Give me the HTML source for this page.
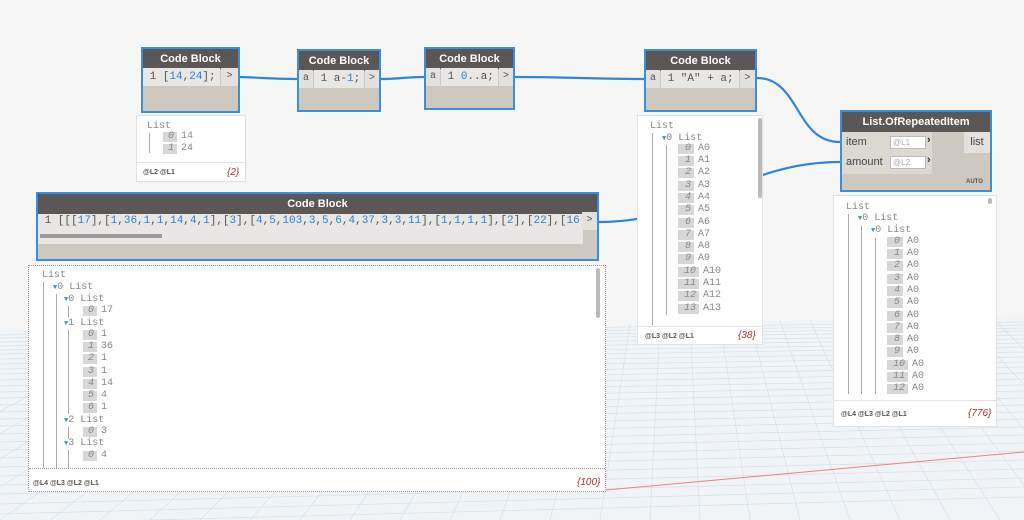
<!DOCTYPE html>
<html><head><meta charset="utf-8"><style>
*{margin:0;padding:0;box-sizing:border-box}
body{width:1024px;height:520px;overflow:hidden;background:#f6f6f6;position:relative;font-family:"Liberation Sans",sans-serif}
.a{position:absolute}
.node{position:absolute;border:2px solid #3b8ed8;background:#cdc8c0}
.hd{background:#5b5756;color:#fff;font:bold 11px "Liberation Sans",sans-serif;text-align:center;height:20px;line-height:20px}
.code{position:absolute;height:18px;background:#e9e7e3;font:11px "Liberation Mono",monospace;line-height:18px;color:#555;white-space:nowrap;overflow:hidden}
.bl{color:#2f7fd8}
.pv{position:absolute;background:#fff;border:1px solid #e2e2e2}
.t{position:absolute;font:10px "Liberation Mono",monospace;color:#888;white-space:nowrap;line-height:10px}
.i{position:absolute;background:#d7d7d7;color:#888;font:italic 10px "Liberation Mono",monospace;text-align:right;padding-right:3px;height:10px;line-height:10px}
.vl{position:absolute;width:1px;background:#aaa}
.ft{position:absolute;font:bold 7px "Liberation Sans",sans-serif;color:#555}
.cnt{position:absolute;font:italic 10px "Liberation Sans",sans-serif;color:#a33}
.tri{color:#3b8ed8;font-size:7px}
.btn{position:absolute;background:#e3e1dd;color:#555;font:10px "Liberation Mono",monospace;text-align:center;line-height:18px;height:18px}
</style></head><body>
<svg class="a" style="left:0;top:0" width="1024" height="520">
<defs><clipPath id="c"><polygon points="0,330 600,325 1024,315 1024,520 0,520"/></clipPath></defs>
<g clip-path="url(#c)" stroke="#d6e0e8" stroke-width="0.7">
<rect x="0" y="310" width="1024" height="210" fill="#f1f4f7" stroke="none"/>
<line x1="0" y1="335" x2="1024" y2="322"/><line x1="0" y1="338" x2="1024" y2="325"/><line x1="0" y1="342" x2="1024" y2="328"/><line x1="0" y1="346" x2="1024" y2="331"/><line x1="0" y1="350" x2="1024" y2="335"/><line x1="0" y1="354" x2="1024" y2="339"/><line x1="0" y1="359" x2="1024" y2="343"/><line x1="0" y1="364" x2="1024" y2="347"/><line x1="0" y1="369" x2="1024" y2="352"/><line x1="0" y1="374" x2="1024" y2="357"/><line x1="0" y1="380" x2="1024" y2="362"/><line x1="0" y1="386" x2="1024" y2="367"/><line x1="0" y1="392" x2="1024" y2="373"/><line x1="0" y1="398" x2="1024" y2="379"/><line x1="0" y1="405" x2="1024" y2="385"/><line x1="0" y1="412" x2="1024" y2="391"/><line x1="0" y1="419" x2="1024" y2="398"/><line x1="0" y1="426" x2="1024" y2="405"/><line x1="0" y1="434" x2="1024" y2="412"/><line x1="0" y1="442" x2="1024" y2="419"/><line x1="0" y1="450" x2="1024" y2="427"/><line x1="0" y1="458" x2="1024" y2="435"/><line x1="0" y1="467" x2="1024" y2="443"/><line x1="0" y1="476" x2="1024" y2="451"/><line x1="0" y1="485" x2="1024" y2="460"/><line x1="0" y1="494" x2="1024" y2="469"/><line x1="0" y1="504" x2="1024" y2="478"/><line x1="0" y1="514" x2="1024" y2="487"/><line x1="0" y1="524" x2="1024" y2="497"/>
<line x1="-200" y1="520" x2="150" y2="330"/><line x1="-150" y1="520" x2="180" y2="330"/><line x1="-100" y1="520" x2="210" y2="330"/><line x1="-50" y1="520" x2="240" y2="330"/><line x1="0" y1="520" x2="270" y2="330"/><line x1="50" y1="520" x2="300" y2="329"/><line x1="100" y1="520" x2="330" y2="328"/><line x1="150" y1="520" x2="360" y2="328"/><line x1="200" y1="520" x2="390" y2="328"/><line x1="250" y1="520" x2="420" y2="327"/><line x1="300" y1="520" x2="450" y2="327"/><line x1="350" y1="520" x2="480" y2="327"/><line x1="400" y1="520" x2="510" y2="326"/><line x1="450" y1="520" x2="540" y2="326"/><line x1="500" y1="520" x2="570" y2="325"/><line x1="550" y1="520" x2="600" y2="325"/><line x1="600" y1="520" x2="630" y2="324"/><line x1="650" y1="520" x2="660" y2="324"/><line x1="700" y1="520" x2="690" y2="323"/><line x1="750" y1="520" x2="720" y2="322"/><line x1="800" y1="520" x2="750" y2="321"/><line x1="850" y1="520" x2="780" y2="321"/><line x1="900" y1="520" x2="810" y2="320"/><line x1="950" y1="520" x2="840" y2="319"/><line x1="1000" y1="520" x2="870" y2="318"/><line x1="1050" y1="520" x2="900" y2="318"/><line x1="1100" y1="520" x2="930" y2="317"/><line x1="1150" y1="520" x2="960" y2="316"/><line x1="1200" y1="520" x2="990" y2="316"/><line x1="1300" y1="520" x2="1050" y2="315"/>
</g>
<line x1="606" y1="490" x2="1024" y2="452" stroke="#f08080" stroke-width="1"/>
<g fill="none" stroke="#2f86d6" stroke-width="2.2">
<path d="M240,77 C270,78 270,79 297,79"/>
<path d="M381,79 C400,79 405,77 424,77"/>
<path d="M515,77 C580,77 580,79 644,79"/>
<path d="M757,78 C800,78 795,142 840,142"/>
<path d="M599,222 C700,222 740,162 840,162"/>
</g>
</svg>

<!-- CB1 -->
<div class="node" style="left:141px;top:47px;width:99px;height:66px"><div class="hd">Code Block</div></div>
<div class="code" style="left:143px;top:68px;width:77px">&nbsp;1 [<span class="bl">14</span>,<span class="bl">24</span>];</div>
<div class="btn" style="left:221px;top:68px;width:17px">&gt;</div>
<div class="pv" style="left:136px;top:115px;width:110px;height:67px">
<div class="t" style="left:10px;top:6px">List</div>
<div class="vl" style="left:12px;top:17px;height:20px"></div>
<div class="i" style="left:26px;top:16px;width:14px">0</div><div class="t" style="left:44px;top:16px">14</div>
<div class="i" style="left:26px;top:28px;width:14px">1</div><div class="t" style="left:44px;top:28px">24</div>
<div class="a" style="left:0;top:46px;width:108px;height:1px;background:#e4e4e4"></div>
<div class="ft" style="left:6px;top:53px">@L2 @L1</div><div class="cnt" style="left:90px;top:51px">{2}</div>
</div>

<!-- CB2 -->
<div class="node" style="left:297px;top:49px;width:84px;height:63px"><div class="hd">Code Block</div></div>
<div class="btn" style="left:299px;top:70px;width:14px">a</div>
<div class="code" style="left:314px;top:70px;width:50px">&nbsp;1 a-<span class="bl">1</span>;</div>
<div class="btn" style="left:365px;top:70px;width:14px">&gt;</div>

<!-- CB3 -->
<div class="node" style="left:424px;top:47px;width:91px;height:63px"><div class="hd">Code Block</div></div>
<div class="btn" style="left:426px;top:68px;width:14px">a</div>
<div class="code" style="left:441px;top:68px;width:57px">&nbsp;1 <span class="bl">0</span>..a;</div>
<div class="btn" style="left:499px;top:68px;width:14px">&gt;</div>

<!-- CB4 -->
<div class="node" style="left:644px;top:49px;width:113px;height:63px"><div class="hd">Code Block</div></div>
<div class="btn" style="left:646px;top:70px;width:14px">a</div>
<div class="code" style="left:661px;top:70px;width:78px">&nbsp;1 "A" + a;</div>
<div class="btn" style="left:740px;top:70px;width:15px">&gt;</div>

<!-- List.OfRepeatedItem -->
<div class="node" style="left:840px;top:110px;width:152px;height:82px"><div class="hd">List.OfRepeatedItem</div>
<div class="a" style="left:0;top:20px;width:90px;height:42px;background:#dcd9d3"></div>
<div class="a" style="left:4px;top:24px;font:11px 'Liberation Sans';color:#444">item</div>
<div class="a" style="left:4px;top:44px;font:11px 'Liberation Sans';color:#444">amount</div>
<div class="a" style="left:48px;top:24px;width:36px;height:13px;background:#fff;border:1px solid #bbb;font:8px 'Liberation Sans';color:#aaa;line-height:11px;padding-left:2px">@L1</div>
<div class="a" style="left:48px;top:44px;width:36px;height:13px;background:#fff;border:1px solid #bbb;font:8px 'Liberation Sans';color:#aaa;line-height:11px;padding-left:2px">@L2</div>
<div class="a" style="left:85px;top:22px;font:bold 11px 'Liberation Sans';color:#333">›</div>
<div class="a" style="left:85px;top:42px;font:bold 11px 'Liberation Sans';color:#333">›</div>
<div class="a" style="left:122px;top:20px;width:26px;height:21px;background:#e3e1dd;font:11px 'Liberation Sans';color:#444;line-height:21px;text-align:center">list</div>
<div class="a" style="left:124px;top:67px;font:bold 6px 'Liberation Sans';color:#555">AUTO</div>
</div>

<!-- Preview4 -->
<div class="pv" style="left:637px;top:115px;width:126px;height:230px">
<div class="a" style="left:120px;top:2px;width:4px;height:80px;background:#bbb;border-radius:2px"></div>
<div class="t" style="left:12px;top:6px">List</div>
<div class="vl" style="left:14px;top:17px;height:192px"></div>
<div class="t" style="left:24px;top:18px"><span class="tri">▼</span>0 List</div>
<div class="vl" style="left:28px;top:29px;height:170px"></div>
<div class="i" style="left:40px;top:28px;width:16px">0</div><div class="t" style="left:60px;top:28px">A0</div>
<div class="i" style="left:40px;top:40px;width:16px">1</div><div class="t" style="left:60px;top:40px">A1</div>
<div class="i" style="left:40px;top:52px;width:16px">2</div><div class="t" style="left:60px;top:52px">A2</div>
<div class="i" style="left:40px;top:65px;width:16px">3</div><div class="t" style="left:60px;top:65px">A3</div>
<div class="i" style="left:40px;top:77px;width:16px">4</div><div class="t" style="left:60px;top:77px">A4</div>
<div class="i" style="left:40px;top:89px;width:16px">5</div><div class="t" style="left:60px;top:89px">A5</div>
<div class="i" style="left:40px;top:102px;width:16px">6</div><div class="t" style="left:60px;top:102px">A6</div>
<div class="i" style="left:40px;top:114px;width:16px">7</div><div class="t" style="left:60px;top:114px">A7</div>
<div class="i" style="left:40px;top:126px;width:16px">8</div><div class="t" style="left:60px;top:126px">A8</div>
<div class="i" style="left:40px;top:138px;width:16px">9</div><div class="t" style="left:60px;top:138px">A9</div>
<div class="i" style="left:40px;top:151px;width:21px">10</div><div class="t" style="left:65px;top:151px">A10</div>
<div class="i" style="left:40px;top:163px;width:21px">11</div><div class="t" style="left:65px;top:163px">A11</div>
<div class="i" style="left:40px;top:175px;width:21px">12</div><div class="t" style="left:65px;top:175px">A12</div>
<div class="i" style="left:40px;top:188px;width:21px">13</div><div class="t" style="left:65px;top:188px">A13</div>
<div class="a" style="left:0;top:210px;width:124px;height:1px;background:#e4e4e4"></div>
<div class="ft" style="left:7px;top:217px">@L3 @L2 @L1</div><div class="cnt" style="left:100px;top:214px">{38}</div>
</div>

<!-- Preview5 -->
<div class="pv" style="left:833px;top:195px;width:164px;height:232px">
<div class="a" style="left:154px;top:2px;width:4px;height:6px;background:#bbb;border-radius:2px"></div>
<div class="t" style="left:12px;top:7px">List</div>
<div class="vl" style="left:14px;top:18px;height:180px"></div>
<div class="t" style="left:24px;top:18px"><span class="tri">▼</span>0 List</div>
<div class="vl" style="left:27px;top:30px;height:168px"></div>
<div class="t" style="left:37px;top:30px"><span class="tri">▼</span>0 List</div>
<div class="vl" style="left:41px;top:42px;height:156px"></div>
<div class="i" style="left:53px;top:41px;width:16px">0</div><div class="t" style="left:73px;top:41px">A0</div>
<div class="i" style="left:53px;top:53px;width:16px">1</div><div class="t" style="left:73px;top:53px">A0</div>
<div class="i" style="left:53px;top:65px;width:16px">2</div><div class="t" style="left:73px;top:65px">A0</div>
<div class="i" style="left:53px;top:78px;width:16px">3</div><div class="t" style="left:73px;top:78px">A0</div>
<div class="i" style="left:53px;top:90px;width:16px">4</div><div class="t" style="left:73px;top:90px">A0</div>
<div class="i" style="left:53px;top:102px;width:16px">5</div><div class="t" style="left:73px;top:102px">A0</div>
<div class="i" style="left:53px;top:115px;width:16px">6</div><div class="t" style="left:73px;top:115px">A0</div>
<div class="i" style="left:53px;top:127px;width:16px">7</div><div class="t" style="left:73px;top:127px">A0</div>
<div class="i" style="left:53px;top:139px;width:16px">8</div><div class="t" style="left:73px;top:139px">A0</div>
<div class="i" style="left:53px;top:151px;width:16px">9</div><div class="t" style="left:73px;top:151px">A0</div>
<div class="i" style="left:53px;top:164px;width:21px">10</div><div class="t" style="left:78px;top:164px">A0</div>
<div class="i" style="left:53px;top:176px;width:21px">11</div><div class="t" style="left:78px;top:176px">A0</div>
<div class="i" style="left:53px;top:188px;width:21px">12</div><div class="t" style="left:78px;top:188px">A0</div>
<div class="a" style="left:0;top:204px;width:162px;height:1px;background:#e4e4e4"></div>
<div class="ft" style="left:7px;top:215px">@L4 @L3 @L2 @L1</div><div class="cnt" style="left:134px;top:212px">{776}</div>
</div>

<!-- Big CB -->
<div class="node" style="left:36px;top:192px;width:563px;height:69px"><div class="hd">Code Block</div>
<div class="a" style="left:0;top:20px;width:545px;height:30px;background:#e9e7e3"></div>
<div class="a" style="left:2px;top:40px;width:122px;height:4px;background:#999"></div>
</div>
<div class="code" style="left:38px;top:212px;width:543px;background:transparent">&nbsp;1 [[[<span class="bl">17</span>],[<span class="bl">1</span>,<span class="bl">36</span>,<span class="bl">1</span>,<span class="bl">1</span>,<span class="bl">14</span>,<span class="bl">4</span>,<span class="bl">1</span>],[<span class="bl">3</span>],[<span class="bl">4</span>,<span class="bl">5</span>,<span class="bl">103</span>,<span class="bl">3</span>,<span class="bl">5</span>,<span class="bl">6</span>,<span class="bl">4</span>,<span class="bl">37</span>,<span class="bl">3</span>,<span class="bl">3</span>,<span class="bl">11</span>],[<span class="bl">1</span>,<span class="bl">1</span>,<span class="bl">1</span>,<span class="bl">1</span>],[<span class="bl">2</span>],[<span class="bl">22</span>],[<span class="bl">16</span></div>
<div class="btn" style="left:582px;top:212px;width:15px">&gt;</div>

<!-- Big preview -->
<div class="pv" style="left:28px;top:265px;width:578px;height:227px;border:1px dotted #999">
<div class="a" style="left:567px;top:2px;width:4px;height:50px;background:#bbb;border-radius:2px"></div>
<div class="t" style="left:13px;top:5px">List</div>
<div class="vl" style="left:14px;top:16px;height:186px"></div>
<div class="t" style="left:24px;top:17px"><span class="tri">▼</span>0 List</div>
<div class="vl" style="left:27px;top:28px;height:174px"></div>
<div class="t" style="left:35px;top:29px"><span class="tri">▼</span>0 List</div>
<div class="vl" style="left:39px;top:40px;height:12px"></div>
<div class="i" style="left:54px;top:40px;width:14px">0</div><div class="t" style="left:72px;top:40px">17</div>
<div class="t" style="left:35px;top:53px"><span class="tri">▼</span>1 List</div>
<div class="vl" style="left:39px;top:64px;height:84px"></div>
<div class="i" style="left:54px;top:64px;width:14px">0</div><div class="t" style="left:72px;top:64px">1</div>
<div class="i" style="left:54px;top:76px;width:14px">1</div><div class="t" style="left:72px;top:76px">36</div>
<div class="i" style="left:54px;top:88px;width:14px">2</div><div class="t" style="left:72px;top:88px">1</div>
<div class="i" style="left:54px;top:101px;width:14px">3</div><div class="t" style="left:72px;top:101px">1</div>
<div class="i" style="left:54px;top:113px;width:14px">4</div><div class="t" style="left:72px;top:113px">14</div>
<div class="i" style="left:54px;top:125px;width:14px">5</div><div class="t" style="left:72px;top:125px">4</div>
<div class="i" style="left:54px;top:137px;width:14px">6</div><div class="t" style="left:72px;top:137px">1</div>
<div class="t" style="left:35px;top:150px"><span class="tri">▼</span>2 List</div>
<div class="vl" style="left:39px;top:161px;height:12px"></div>
<div class="i" style="left:54px;top:161px;width:14px">0</div><div class="t" style="left:72px;top:161px">3</div>
<div class="t" style="left:35px;top:173px"><span class="tri">▼</span>3 List</div>
<div class="vl" style="left:39px;top:184px;height:18px"></div>
<div class="i" style="left:54px;top:185px;width:14px">0</div><div class="t" style="left:72px;top:185px">4</div>
<div class="a" style="left:0;top:202px;width:576px;height:1px;border-top:1px dotted #999"></div>
<div class="ft" style="left:4px;top:214px">@L4 @L3 @L2 @L1</div><div class="cnt" style="left:548px;top:211px">{100}</div>
</div>
</body></html>
